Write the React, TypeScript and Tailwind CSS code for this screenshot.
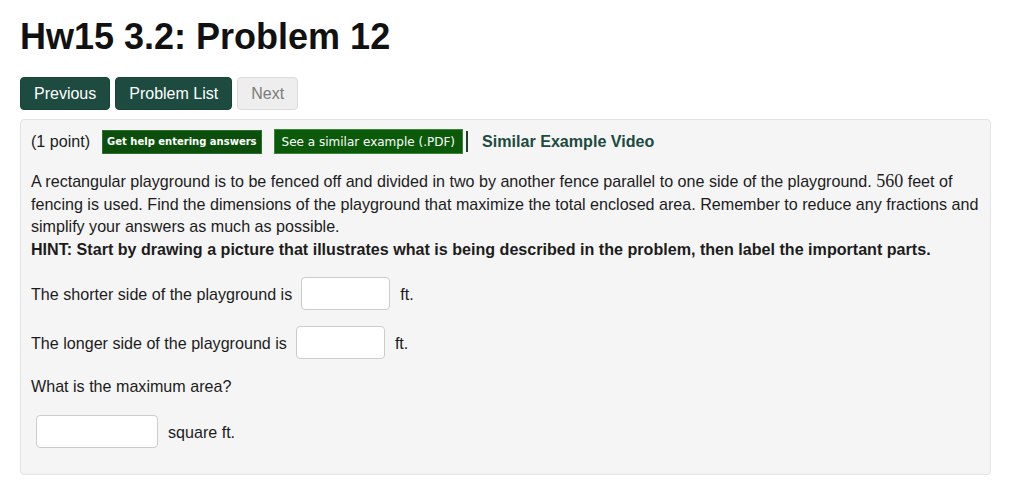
const font = { fontFamily: '"Liberation Sans", Arial, sans-serif' };

const NavButton = ({ label, disabled }: { label: string; disabled?: boolean }) => (
    <button
        className={
            disabled
                ? 'h-[33px] px-[13px] rounded-[4px] border border-[#dcdcdc] bg-[#eeeeee] text-[#7b7b7b] text-[16px]'
                : 'h-[33px] px-[13px] rounded-[4px] border border-[#1a4338] bg-[#1d4b3f] text-white text-[16px]'
        }
    >
        {label}
    </button>
);

const AnswerRow = ({ label, inputWidth, unit }: { label: string; inputWidth: string; unit: string }) => (
    <div className='flex items-center h-[33px]'>
        <span>{label}</span>
        <input type='text' className={`${inputWidth} h-[33px] ml-[9px] bg-white border border-[#cccccc] rounded-[4px]`} />
        <span className='ml-[10px]'>{unit}</span>
    </div>
);

export default function App() {
    return (
        <div className='bg-white min-h-[500px] px-[20px] text-[#1c1c1c]' style={font}>
            <h1 className='text-[36px] font-bold text-[#111111] leading-none pt-[19px]'>Hw15 3.2: Problem 12</h1>
            <div className='flex gap-[5px] mt-[22px]'>
                <NavButton label='Previous' />
                <NavButton label='Problem List' />
                <NavButton label='Next' disabled />
            </div>
            <div className='mt-[9px] w-[971px] h-[356px] bg-[#f5f5f5] border border-[#e3e3e3] rounded-[4px] pl-[10px] pr-[10px] pt-[9px] text-[16.1px]'>
                <div className='flex items-center h-[25px]'>
                    <span>(1 point)</span>
                    <span
                        className='ml-[12px] h-[24px] px-[4px] flex items-center bg-[#0c4f0c] border border-[#2d6e2d] text-white text-[10px] font-bold'
                        style={{ fontFamily: '"DejaVu Sans", Verdana, sans-serif' }}
                    >
                        Get help entering answers
                    </span>
                    <span
                        className='ml-[12px] h-[25px] px-[7px] flex items-center bg-[#0a5a0a] border border-[#3b843b] text-white text-[12px]'
                        style={{ fontFamily: '"DejaVu Sans", Verdana, sans-serif' }}
                    >
                        See a similar example (.PDF)
                    </span>
                    <span className='ml-[3px] w-[2px] h-[21px] bg-[#1f3d36]'></span>
                    <span className='ml-[14px] font-bold text-[#1d4a3f]'>Similar Example Video</span>
                </div>
                <p className='mt-[16px] leading-[22.6px]'>
                    A rectangular playground is to be fenced off and divided in two by another fence parallel to one side of the playground.{' '}
                    <span className='text-[18px] leading-none' style={{ fontFamily: '"Liberation Serif", "Times New Roman", serif' }}>560</span> feet of
                    fencing is used. Find the dimensions of the playground that maximize the total enclosed area. Remember to reduce any fractions and
                    simplify your answers as much as possible.
                    <br />
                    <b>HINT: Start by drawing a picture that illustrates what is being described in the problem, then label the important parts.</b>
                </p>
                <div className='mt-[17px]'>
                    <AnswerRow label='The shorter side of the playground is' inputWidth='w-[89px]' unit='ft.' />
                </div>
                <div className='mt-[16px]'>
                    <AnswerRow label='The longer side of the playground is' inputWidth='w-[89px]' unit='ft.' />
                </div>
                <p className='mt-[16px] leading-[22px]'>What is the maximum area?</p>
                <div className='flex items-center mt-[18px] ml-[5px]'>
                    <input type='text' className='w-[122px] h-[33px] bg-white border border-[#cccccc] rounded-[4px]' />
                    <span className='ml-[10px]'>square ft.</span>
                </div>
            </div>
        </div>
    );
}
